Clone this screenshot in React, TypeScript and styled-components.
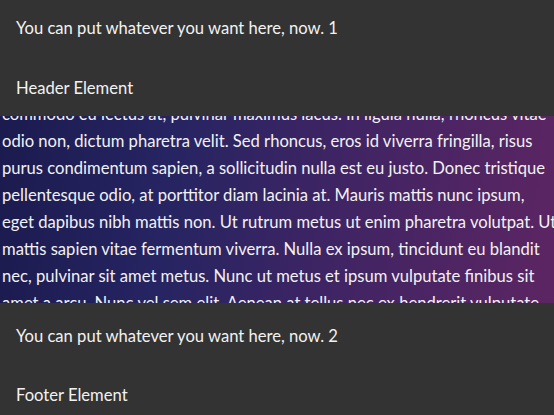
import React from "react";
import styled, { createGlobalStyle } from "styled-components";

const GlobalStyle = createGlobalStyle`
  html, body { margin: 0; padding: 0; height: 100%; overflow: hidden; background: #333; }
  body { font-family: "Lato", "Liberation Sans", sans-serif; font-size: 16.6px; color: #f2f2f2; }
  #root { height: 100%; }
`;

const Page = styled.div`
  display: flex;
  flex-direction: column;
  height: 100vh;
  overflow: hidden;
`;

const Bar = styled.section<{ $top: number; $gap: number; $height?: number }>`
  flex: 0 0 auto;
  display: flex;
  flex-direction: column;
  gap: ${(p) => p.$gap}px;
  padding: ${(p) => p.$top}px 16px 0;
  box-sizing: border-box;
  height: ${(p) => (p.$height ? `${p.$height}px` : "auto")};
  background: #333333;
`;

const BarText = styled.p`
  margin: 0;
  line-height: 20px;
  white-space: nowrap;
`;

const Scroller = styled.main`
  flex: 0 0 187px;
  overflow: hidden;
  background: linear-gradient(95deg, #1b1b4f 0%, #262462 30%, #3f2464 60%, #5c2562 100%);
`;

const Article = styled.div`
  margin-top: -15px;
  padding-left: 2px;
`;

const Line = styled.span`
  display: block;
  line-height: 27px;
  white-space: nowrap;
`;

const lines = [
  "commodo eu lectus at, pulvinar maximus lacus. In ligula nulla, rhoncus vitae",
  "odio non, dictum pharetra velit. Sed rhoncus, eros id viverra fringilla, risus",
  "purus condimentum sapien, a sollicitudin nulla est eu justo. Donec tristique",
  "pellentesque odio, at porttitor diam lacinia at. Mauris mattis nunc ipsum,",
  "eget dapibus nibh mattis non. Ut rutrum metus ut enim pharetra volutpat. Ut",
  "mattis sapien vitae fermentum viverra. Nulla ex ipsum, tincidunt eu blandit",
  "nec, pulvinar sit amet metus. Nunc ut metus et ipsum vulputate finibus sit",
  "amet a arcu. Nunc vel sem elit. Aenean at tellus nec ex hendrerit vulputate",
];

export default function App() {
  return (
    <>
      <GlobalStyle />
      <Page>
        <Bar $top={18} $gap={40} $height={116}>
          <BarText>You can put whatever you want here, now. 1</BarText>
          <BarText>Header Element</BarText>
        </Bar>
        <Scroller>
          <Article>
            {lines.map((l, i) => (
              <Line key={i}>{l}</Line>
            ))}
          </Article>
        </Scroller>
        <Bar $top={23} $gap={39}>
          <BarText>You can put whatever you want here, now. 2</BarText>
          <BarText>Footer Element</BarText>
        </Bar>
      </Page>
    </>
  );
}
